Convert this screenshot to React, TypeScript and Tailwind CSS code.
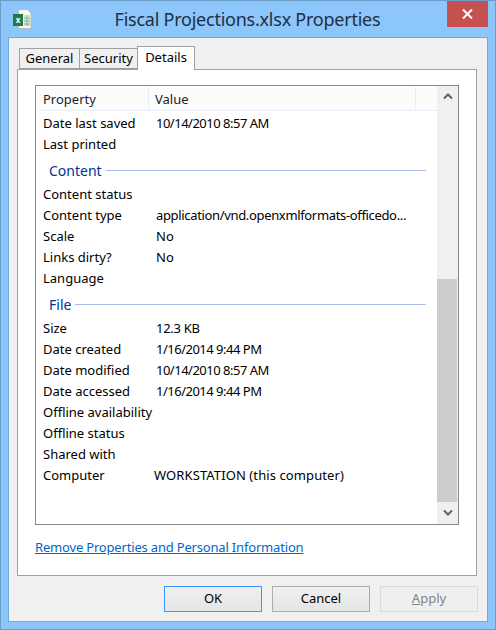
import React from 'react';

const FONT = "font-['Noto_Sans',sans-serif]";

type Row = { label: string; value?: string; valueClass?: string };

const topRows: Row[] = [
  { label: 'Date last saved', value: '10/14/2010 8:57 AM', valueClass: 'tracking-[-0.5px]' },
  { label: 'Last printed' },
];

const contentRows: Row[] = [
  { label: 'Content status' },
  { label: 'Content type', value: 'application/vnd.openxmlformats-officedo...', valueClass: 'tracking-[-0.34px]' },
  { label: 'Scale', value: 'No' },
  { label: 'Links dirty?', value: 'No' },
  { label: 'Language' },
];

const fileRows: Row[] = [
  { label: 'Size', value: '12.3 KB', valueClass: 'tracking-[-0.3px]' },
  { label: 'Date created', value: '1/16/2014 9:44 PM', valueClass: 'tracking-[-0.5px]' },
  { label: 'Date modified', value: '10/14/2010 8:57 AM', valueClass: 'tracking-[-0.5px]' },
  { label: 'Date accessed', value: '1/16/2014 9:44 PM', valueClass: 'tracking-[-0.5px]' },
  { label: 'Offline availability' },
  { label: 'Offline status' },
  { label: 'Shared with' },
  { label: 'Computer', value: 'WORKSTATION (this computer)', valueClass: 'ml-[-2px] tracking-[0.1px]' },
];

function PropRow({ label, value, valueClass }: Row) {
  return (
    <div className="flex h-[21px] items-center text-[13px] text-black">
      <span className="w-[119px] shrink-0 whitespace-nowrap pl-[6px]">{label}</span>
      {value && <span className={`whitespace-nowrap ${valueClass ?? ''}`}>{value}</span>}
    </div>
  );
}

function GroupHeader({ title }: { title: string }) {
  return (
    <div className="flex h-[26px] items-center pl-[12px] pr-[11px]">
      <span className="text-[14px] text-[#003399]">{title}</span>
      <div className="ml-[4px] h-px flex-1 bg-[#a9bde6]" />
    </div>
  );
}

function Tab({ label, width, active }: { label: string; width: string; active?: boolean }) {
  if (active) {
    return (
      <div className={`z-10 -mb-px flex h-[24px] items-center justify-center border border-b-0 border-[#a0a0a0] bg-white pb-[2px] text-[13px] ${width}`}>
        {label}
      </div>
    );
  }
  return (
    <div className={`-mr-px flex h-[21px] items-center justify-center border border-[#a0a0a0] bg-[#f0f0f0] text-[13px] ${width}`}>
      {label}
    </div>
  );
}

function ActionButton({ children, kind }: { children: React.ReactNode; kind?: 'default' | 'disabled' }) {
  const tone =
    kind === 'default'
      ? 'border-[#3399ff] bg-gradient-to-b from-[#f0f0f0] to-[#e5e5e5] text-black'
      : kind === 'disabled'
        ? 'border-[#d9d9d9] bg-[#efefef] text-[#838383]'
        : 'border-[#acacac] bg-gradient-to-b from-[#f0f0f0] to-[#e5e5e5] text-black';
  return (
    <div className={`flex h-[26px] w-[98px] items-center justify-center border text-[13px] ${tone}`}>{children}</div>
  );
}

export default function App() {
  return (
    <div className={`flex h-[630px] w-[496px] flex-col border border-[#6b9dc9] bg-[#8cc6fb] ${FONT}`}>
      {/* title bar */}
      <div className="relative flex h-[36px] shrink-0 items-center justify-center">
        <svg className="absolute left-[11px] top-[7px]" width="20" height="22" viewBox="0 0 20 22">
          <path d="M6.5 1.5h9l3.5 3.5v15.5H6.5z" fill="#f7f7f7" stroke="#b4bdb8" />
          <path d="M12 7h6v11h-6z" fill="#d3e8da" />
          <path d="M12 10h6M12 13h6M12 16h6M15 7v11" stroke="#6fb08a" strokeWidth="0.8" />
          <rect x="1" y="6" width="10" height="12" fill="#1f7a4a" />
          <text x="6" y="15" textAnchor="middle" fontSize="8" fontWeight="700" fill="#fff">x</text>
        </svg>
        <span className="pr-[1px] text-[18px] tracking-[-0.24px] text-[#1f2f44]">Fiscal Projections.xlsx Properties</span>
        <div className="absolute right-[7px] top-0 flex h-[26px] w-[41px] items-center justify-center bg-[#c75050]">
          <svg width="11" height="10" viewBox="0 0 11 10">
            <path d="M1 0.5l9 9M10 0.5l-9 9" stroke="#fff" strokeWidth="2" />
          </svg>
        </div>
      </div>

      {/* client area */}
      <div className="mx-[7px] flex h-[585px] flex-col border border-[#6ea8dc] bg-[#f0f0f0] pl-[8px] pr-[10px] pt-[8px]">
        <div className="flex items-end pl-[2px]">
          <Tab label="General" width="w-[61px]" />
          <Tab label="Security" width="w-[59px]" />
          <Tab label="Details" width="w-[58px]" active />
        </div>

        <div className="flex h-[507px] flex-col border border-[#a0a0a0] bg-white px-[17px] pt-[15px]">
          <div className="flex h-[440px] border border-[#828790] bg-white">
            <div className="flex min-w-0 flex-1 flex-col pl-[1px] pt-px">
              <div className="flex h-[24px] shrink-0 border-b border-[#e5eefb] bg-[#fcfcfc] text-[13px] text-[#222]">
                <div className="flex w-[112px] items-center border-r border-[#e5eefb] pl-[6px] pt-[2px]">Property</div>
                <div className="flex flex-1 items-center border-r border-[#e5eefb] pl-[6px] pt-[2px]">Value</div>
                <div className="w-[21px]" />
              </div>
              <div className="pt-[2px]">
                {topRows.map((r) => (
                  <PropRow key={r.label} {...r} />
                ))}
                <div className="mt-[2px]">
                  <GroupHeader title="Content" />
                </div>
                <div className="mt-[1px]">
                  {contentRows.map((r) => (
                    <PropRow key={r.label} {...r} />
                  ))}
                </div>
                <div className="mt-[2px]">
                  <GroupHeader title="File" />
                </div>
                <div className="mt-[1px]">
                  {fileRows.map((r) => (
                    <PropRow key={r.label} {...r} />
                  ))}
                </div>
              </div>
            </div>

            {/* scrollbar */}
            <div className="flex w-[21px] shrink-0 flex-col bg-[#f0f0f0] pb-px pt-px">
              <div className="flex h-[19px] items-center justify-center">
                <svg width="10" height="7" viewBox="0 0 10 7">
                  <path d="M1 5.5l4-4 4 4" fill="none" stroke="#606060" strokeWidth="2" />
                </svg>
              </div>
              <div className="h-[173px]" />
              <div className="mr-px h-[223px] bg-[#cdcdcd]" />
              <div className="flex flex-1 items-center justify-center">
                <svg width="10" height="7" viewBox="0 0 10 7">
                  <path d="M1 1.5l4 4 4-4" fill="none" stroke="#606060" strokeWidth="2" />
                </svg>
              </div>
            </div>
          </div>

          <div className="mt-[13px] text-[13px] tracking-[-0.18px]">
            <span className="text-[#0066cc] underline">Remove Properties and Personal Information</span>
          </div>
        </div>

        <div className="-mr-px mt-[10px] flex justify-end gap-[10px]">
          <ActionButton kind="default">OK</ActionButton>
          <ActionButton>Cancel</ActionButton>
          <ActionButton kind="disabled">
            <span>
              <span className="underline">A</span>pply
            </span>
          </ActionButton>
        </div>
      </div>
    </div>
  );
}
